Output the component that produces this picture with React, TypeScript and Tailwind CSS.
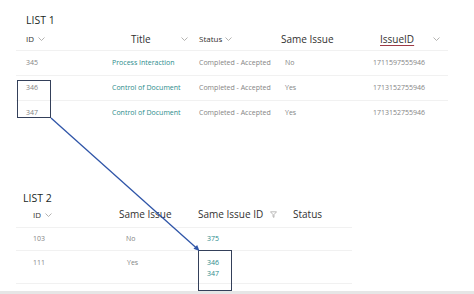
function Chevron({ className = "" }: { className?: string }) {
  return (
    <svg width="7" height="4" viewBox="0 0 7 4" className={className}>
      <path d="M0.5 0.5 L3.5 3.5 L6.5 0.5" fill="none" stroke="#a19f9d" strokeWidth="0.8" />
    </svg>
  );
}

function FilterIcon() {
  return (
    <svg width="7" height="7" viewBox="0 0 7 7" className="ml-[7px]">
      <path d="M0.5 0.8 H6.5 L4 3.6 V6.4 L3 5.8 V3.6 Z" fill="none" stroke="#a19f9d" strokeWidth="0.7" />
    </svg>
  );
}

const list1 = [
  { id: "345", title: "Process Interaction", same: "No", issue: "1711597555946" },
  { id: "346", title: "Control of Document", same: "Yes", issue: "1713152755946" },
  { id: "347", title: "Control of Document", same: "Yes", issue: "1713152755946" },
];

export default function App() {
  return (
    <div className="relative w-[474px] h-[294px] bg-white overflow-hidden font-['Open_Sans',sans-serif]">
      <div className="pt-[14px] pl-[16px]">
        <div className="ml-[10px] h-[12px] leading-[12px] text-[10.5px] font-medium text-[#201f1e]">LIST 1</div>

        <div className="w-[432px] mt-[2px]">
          <div className="grid grid-cols-[96px_87px_82px_92px_75px] h-[22px] items-center text-[#323130]">
            <div className="pl-[10px] flex items-center gap-[4px] text-[8px]">
              ID <Chevron />
            </div>
            <div className="pl-[19px] flex items-center text-[10px]">
              Title <Chevron className="ml-[30px]" />
            </div>
            <div className="flex items-center gap-[3px] text-[8px]">
              Status <Chevron />
            </div>
            <div className="text-[10px]">Same Issue</div>
            <div className="pl-[7px] flex items-center text-[10px]">
              <span className="underline decoration-[#9e3a46] decoration-1 underline-offset-2">IssueID</span>
              <Chevron className="ml-[19px]" />
            </div>
          </div>
          {list1.map((r) => (
            <div
              key={r.id}
              className="grid grid-cols-[96px_87px_82px_92px_75px] h-[25px] items-center border-t border-[#f1f1f1] text-[7px] text-[#858585]"
            >
              <div className="pl-[10px]">{r.id}</div>
              <div className="text-[#2b8c8c]">{r.title}</div>
              <div>Completed - Accepted</div>
              <div className="pl-[4px]">{r.same}</div>
              <div>{r.issue}</div>
            </div>
          ))}
        </div>

        <div className="mt-[67px] ml-[7px] h-[12px] leading-[12px] text-[10.5px] font-medium text-[#201f1e]">LIST 2</div>

        <div className="w-[336px] mt-[1px]">
          <div className="grid grid-cols-[103px_79px_95px_59px] h-[22px] items-center pb-[3px] text-[#323130]">
            <div className="pl-[17px] flex items-center gap-[4px] text-[8px]">
              ID <Chevron />
            </div>
            <div className="text-[10px]">Same Issue</div>
            <div className="flex items-center text-[10px]">
              Same Issue ID <FilterIcon />
            </div>
            <div className="text-[10px]">Status</div>
          </div>
          <div className="grid grid-cols-[103px_79px_95px_59px] h-[23px] items-center border-t border-[#f1f1f1] text-[7px] text-[#858585]">
            <div className="pl-[17px]">103</div>
            <div className="pl-[7px]">No</div>
            <div className="pl-[9px] text-[#2b8c8c]">375</div>
            <div />
          </div>
          <div className="grid grid-cols-[103px_79px_95px_59px] h-[34px] border-t border-b border-[#f1f1f1] pt-[6px] text-[7px] leading-[11px] text-[#858585]">
            <div className="pl-[17px]">111</div>
            <div className="pl-[8px]">Yes</div>
            <div className="pl-[9px] text-[#2b8c8c] flex flex-col">
              <span>346</span>
              <span>347</span>
            </div>
            <div />
          </div>
        </div>
      </div>

      <div className="absolute left-0 right-0 bottom-0 h-[3px] bg-[#e6e6e6]" />

      <svg className="absolute inset-0 pointer-events-none" width="474" height="294">
        <rect x="17.5" y="80.5" width="33" height="37" fill="none" stroke="#34405a" strokeWidth="1" />
        <rect x="198.5" y="250.5" width="33" height="40" fill="none" stroke="#34405a" strokeWidth="1" />
        <line x1="51" y1="118" x2="197" y2="248.5" stroke="#2f55a8" strokeWidth="1.3" />
        <path d="M199.5 251 L193.5 248.8 L197.2 245 Z" fill="#2f55a8" />
      </svg>
    </div>
  );
}
